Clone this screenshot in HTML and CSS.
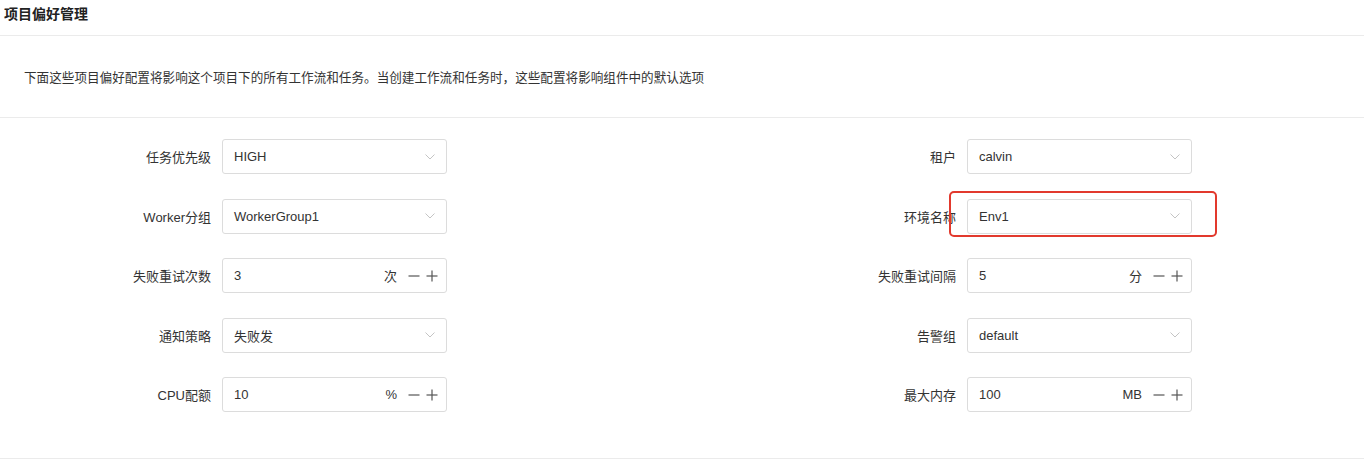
FILE: index.html
```html
<!DOCTYPE html>
<html lang="zh-CN">
<head>
<meta charset="utf-8">
<title>项目偏好管理</title>
<link rel="stylesheet" href="styles.css">
</head>
<body>
<div class="page">
  <div class="header"><span class="title">项目偏好管理</span></div>
  <div class="desc">下面这些项目偏好配置将影响这个项目下的所有工作流和任务。当创建工作流和任务时，这些配置将影响组件中的默认选项</div>
  <div class="form">
    <div class="item">
      <label class="label">任务优先级</label>
      <div class="control select"><span class="value">HIGH</span><svg class="chev" width="10" height="6" viewBox="0 0 10 6"><polyline points="0.5,0.5 5,5 9.5,0.5" fill="none" stroke="#c4c4c4" stroke-width="1"/></svg></div>
    </div>
    <div class="item">
      <label class="label">租户</label>
      <div class="control select"><span class="value">calvin</span><svg class="chev" width="10" height="6" viewBox="0 0 10 6"><polyline points="0.5,0.5 5,5 9.5,0.5" fill="none" stroke="#c4c4c4" stroke-width="1"/></svg></div>
    </div>
    <div class="item">
      <label class="label">Worker分组</label>
      <div class="control select"><span class="value">WorkerGroup1</span><svg class="chev" width="10" height="6" viewBox="0 0 10 6"><polyline points="0.5,0.5 5,5 9.5,0.5" fill="none" stroke="#c4c4c4" stroke-width="1"/></svg></div>
    </div>
    <div class="item">
      <label class="label">环境名称</label>
      <div class="control select"><span class="value">Env1</span><svg class="chev" width="10" height="6" viewBox="0 0 10 6"><polyline points="0.5,0.5 5,5 9.5,0.5" fill="none" stroke="#c4c4c4" stroke-width="1"/></svg></div>
      <div class="highlight"></div>
    </div>
    <div class="item">
      <label class="label">失败重试次数</label>
      <div class="control number"><span class="value">3</span><span class="unit">次</span><svg class="step minus" width="12" height="12" viewBox="0 0 12 12"><line x1="0.5" y1="6" x2="11.5" y2="6" stroke="#555" stroke-width="1.2"/></svg><svg class="step" width="12" height="12" viewBox="0 0 12 12"><line x1="0.5" y1="6" x2="11.5" y2="6" stroke="#555" stroke-width="1.2"/><line x1="6" y1="0.5" x2="6" y2="11.5" stroke="#555" stroke-width="1.2"/></svg></div>
    </div>
    <div class="item">
      <label class="label">失败重试间隔</label>
      <div class="control number"><span class="value">5</span><span class="unit">分</span><svg class="step minus" width="12" height="12" viewBox="0 0 12 12"><line x1="0.5" y1="6" x2="11.5" y2="6" stroke="#555" stroke-width="1.2"/></svg><svg class="step" width="12" height="12" viewBox="0 0 12 12"><line x1="0.5" y1="6" x2="11.5" y2="6" stroke="#555" stroke-width="1.2"/><line x1="6" y1="0.5" x2="6" y2="11.5" stroke="#555" stroke-width="1.2"/></svg></div>
    </div>
    <div class="item">
      <label class="label">通知策略</label>
      <div class="control select"><span class="value">失败发</span><svg class="chev" width="10" height="6" viewBox="0 0 10 6"><polyline points="0.5,0.5 5,5 9.5,0.5" fill="none" stroke="#c4c4c4" stroke-width="1"/></svg></div>
    </div>
    <div class="item">
      <label class="label">告警组</label>
      <div class="control select"><span class="value">default</span><svg class="chev" width="10" height="6" viewBox="0 0 10 6"><polyline points="0.5,0.5 5,5 9.5,0.5" fill="none" stroke="#c4c4c4" stroke-width="1"/></svg></div>
    </div>
    <div class="item">
      <label class="label">CPU配额</label>
      <div class="control number"><span class="value">10</span><span class="unit">%</span><svg class="step minus" width="12" height="12" viewBox="0 0 12 12"><line x1="0.5" y1="6" x2="11.5" y2="6" stroke="#555" stroke-width="1.2"/></svg><svg class="step" width="12" height="12" viewBox="0 0 12 12"><line x1="0.5" y1="6" x2="11.5" y2="6" stroke="#555" stroke-width="1.2"/><line x1="6" y1="0.5" x2="6" y2="11.5" stroke="#555" stroke-width="1.2"/></svg></div>
    </div>
    <div class="item">
      <label class="label">最大内存</label>
      <div class="control number"><span class="value">100</span><span class="unit">MB</span><svg class="step minus" width="12" height="12" viewBox="0 0 12 12"><line x1="0.5" y1="6" x2="11.5" y2="6" stroke="#555" stroke-width="1.2"/></svg><svg class="step" width="12" height="12" viewBox="0 0 12 12"><line x1="0.5" y1="6" x2="11.5" y2="6" stroke="#555" stroke-width="1.2"/><line x1="6" y1="0.5" x2="6" y2="11.5" stroke="#555" stroke-width="1.2"/></svg></div>
    </div>
  </div>
</div>
</body>
</html>
```
FILE: styles.css
```css
* { box-sizing: border-box; }
html, body {
  margin: 0;
  padding: 0;
  background: #fff;
}
body {
  font-family: "Liberation Sans", "Noto Sans CJK SC", sans-serif;
  color: #333;
}
.page {
  width: 1364px;
}
.header {
  height: 36px;
  padding: 4px 4px 0;
  border-bottom: 1px solid #ebebeb;
}
.title {
  font-size: 14px;
  line-height: 20px;
  font-weight: 700;
  color: #222;
}
.desc {
  height: 82px;
  padding: 34px 0 0 24px;
  font-size: 12.6px;
  line-height: 16px;
  color: #333;
  border-bottom: 1px solid #ebebeb;
}
.form {
  display: grid;
  grid-template-columns: 745px 1fr;
  row-gap: 24.5px;
  padding: 21px 0 46px;
  border-bottom: 1px solid #ebebeb;
}
.item {
  position: relative;
  display: flex;
  align-items: center;
  height: 35px;
}
.label {
  width: 211px;
  margin-right: 11px;
  text-align: right;
  font-size: 13px;
  color: #333;
}
.control {
  width: 225px;
  height: 35px;
  border: 1px solid #dcdcdc;
  border-radius: 3px;
  display: flex;
  align-items: center;
  padding: 0 10px 0 11px;
  font-size: 13px;
  color: #333;
}
.control.number {
  padding-right: 8px;
}
.value {
  flex: 1;
}
.chev {
  margin-right: 1px;
}
.unit {
  margin-right: 11px;
  font-size: 13px;
}
.step {
  display: block;
  flex: none;
}
.step.minus {
  margin-right: 6px;
}
.highlight {
  position: absolute;
  left: 204px;
  top: -7.5px;
  width: 268px;
  height: 46px;
  border: 2px solid #e2392d;
  border-radius: 5px;
  pointer-events: none;
}
```
